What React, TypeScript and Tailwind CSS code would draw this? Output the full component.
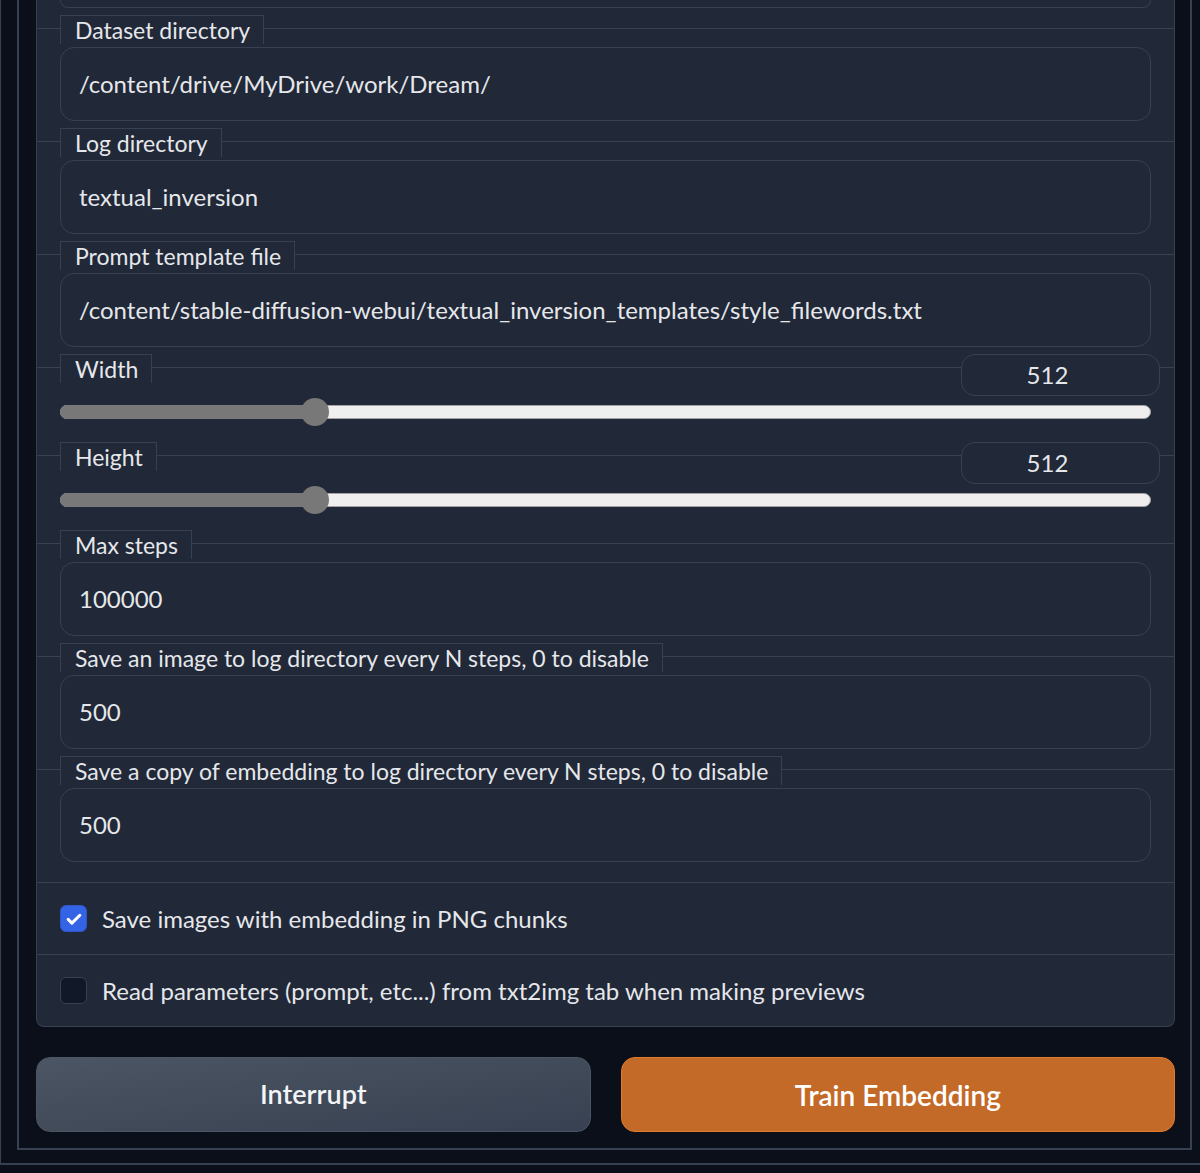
import type { ReactNode } from 'react'

const TEXT_ROWS_TOP = [
  { label: 'Dataset directory', value: '/content/drive/MyDrive/work/Dream/' },
  { label: 'Log directory', value: 'textual_inversion' },
  {
    label: 'Prompt template file',
    value: '/content/stable-diffusion-webui/textual_inversion_templates/style_filewords.txt',
  },
]

const TEXT_ROWS_BOTTOM = [
  { label: 'Max steps', value: '100000' },
  { label: 'Save an image to log directory every N steps, 0 to disable', value: '500' },
  { label: 'Save a copy of embedding to log directory every N steps, 0 to disable', value: '500' },
]

function BlockLabel({ children }: { children: ReactNode }) {
  return (
    <div className="h-[29px] w-fit border-x border-t border-[#374151] bg-[#212837] pl-[14px] pr-[13px] text-[23px] leading-[29px] text-[#e5e7eb]">
      {children}
    </div>
  )
}

function TextRow({ label, value }: { label: string; value: string }) {
  return (
    <div className="border-t border-[#374151] px-[23px] pb-[20px]">
      <div className="-mt-[14px]">
        <BlockLabel>{label}</BlockLabel>
      </div>
      <div className="mt-[3px] flex h-[74px] items-center rounded-[14px] border border-[#374151] px-[18px] text-[24px] text-[#e5e7eb]">
        {value}
      </div>
    </div>
  )
}

function SliderRow({ label, value, percent }: { label: string; value: number; percent: number }) {
  return (
    <div className="border-t border-[#374151] px-[23px] pb-[36px]">
      <div className="-mt-[14px] flex items-start justify-between">
        <BlockLabel>{label}</BlockLabel>
        <div className="-mr-[9px] flex h-[42px] w-[199px] items-center justify-center rounded-[14px] border border-[#374151] bg-[#212837] pr-[26px] text-[24px] text-[#e5e7eb]">
          {value}
        </div>
      </div>
      <div className="relative mt-[9px] h-[14px] rounded-full border border-[#a3a3a3] bg-[#efefef]">
        <div
          className="absolute -left-px -top-px h-[14px] rounded-full bg-[#787878]"
          style={{ width: `calc(14px + ${percent} * (100% - 28px))` }}
        />
        <div
          className="absolute -top-[8px] h-[28px] w-[28px] rounded-full bg-[#787878]"
          style={{ left: `calc(${percent} * (100% - 28px))` }}
        />
      </div>
    </div>
  )
}

function CheckRow({ label, checked }: { label: string; checked: boolean }) {
  return (
    <div className="flex h-[72px] items-center gap-[15px] border-t border-[#374151] px-[23px] text-[24px] text-[#e5e7eb]">
      {checked ? (
        <span className="flex h-[27px] w-[27px] items-center justify-center rounded-[6px] border border-[#2f55c9] bg-[#3563e6]">
          <svg viewBox="0 0 24 24" className="h-[20px] w-[20px]" fill="none" stroke="white" strokeWidth={3.6} strokeLinecap="round" strokeLinejoin="round">
            <path d="M5 12.5l4.5 4.5L19 7.5" />
          </svg>
        </span>
      ) : (
        <span className="h-[27px] w-[27px] rounded-[6px] border border-[#374151] bg-[#111827]" />
      )}
      <span>{label}</span>
    </div>
  )
}

export default function App() {
  const sliderPos = (512 - 64) / (2048 - 64)

  return (
    <div className="min-h-[1173px] overflow-hidden bg-[#0b0f19] font-['Lato',sans-serif]">
      <div className="w-[1240px] border-b-2 border-l border-[#374151] pb-[13px] pl-[16px]">
        <div className="w-[1175px] border-x-2 border-b-2 border-[#374151] pb-[16px] pl-[17px] pr-[15px]">
          {/* form panel (scrolled, top part cut off) */}
          <div className="rounded-b-[8px] border-x border-b border-[#374151] bg-[#212837]">
            <div className="mx-[23px] h-[8px] rounded-b-[14px] border-x border-b border-[#374151]" />
            <div className="h-[20px]" />
            {TEXT_ROWS_TOP.map((row) => (
              <TextRow key={row.label} {...row} />
            ))}
            <SliderRow label="Width" value={512} percent={sliderPos} />
            <SliderRow label="Height" value={512} percent={sliderPos} />
            {TEXT_ROWS_BOTTOM.map((row) => (
              <TextRow key={row.label} {...row} />
            ))}
            <CheckRow label="Save images with embedding in PNG chunks" checked />
            <CheckRow label="Read parameters (prompt, etc...) from txt2img tab when making previews" checked={false} />
          </div>

          <div className="mt-[30px] grid grid-cols-2 gap-[30px]">
            <button className="h-[75px] rounded-[14px] border border-[#4b5563] bg-gradient-to-br from-[#4b5563] to-[#374151] text-[27px] font-semibold text-[#f3f4f6]">
              Interrupt
            </button>
            <button className="h-[75px] rounded-[14px] border border-[#e07a2c] bg-[#c46a29] text-[28px] font-semibold text-white">
              Train Embedding
            </button>
          </div>
        </div>
      </div>
    </div>
  )
}
